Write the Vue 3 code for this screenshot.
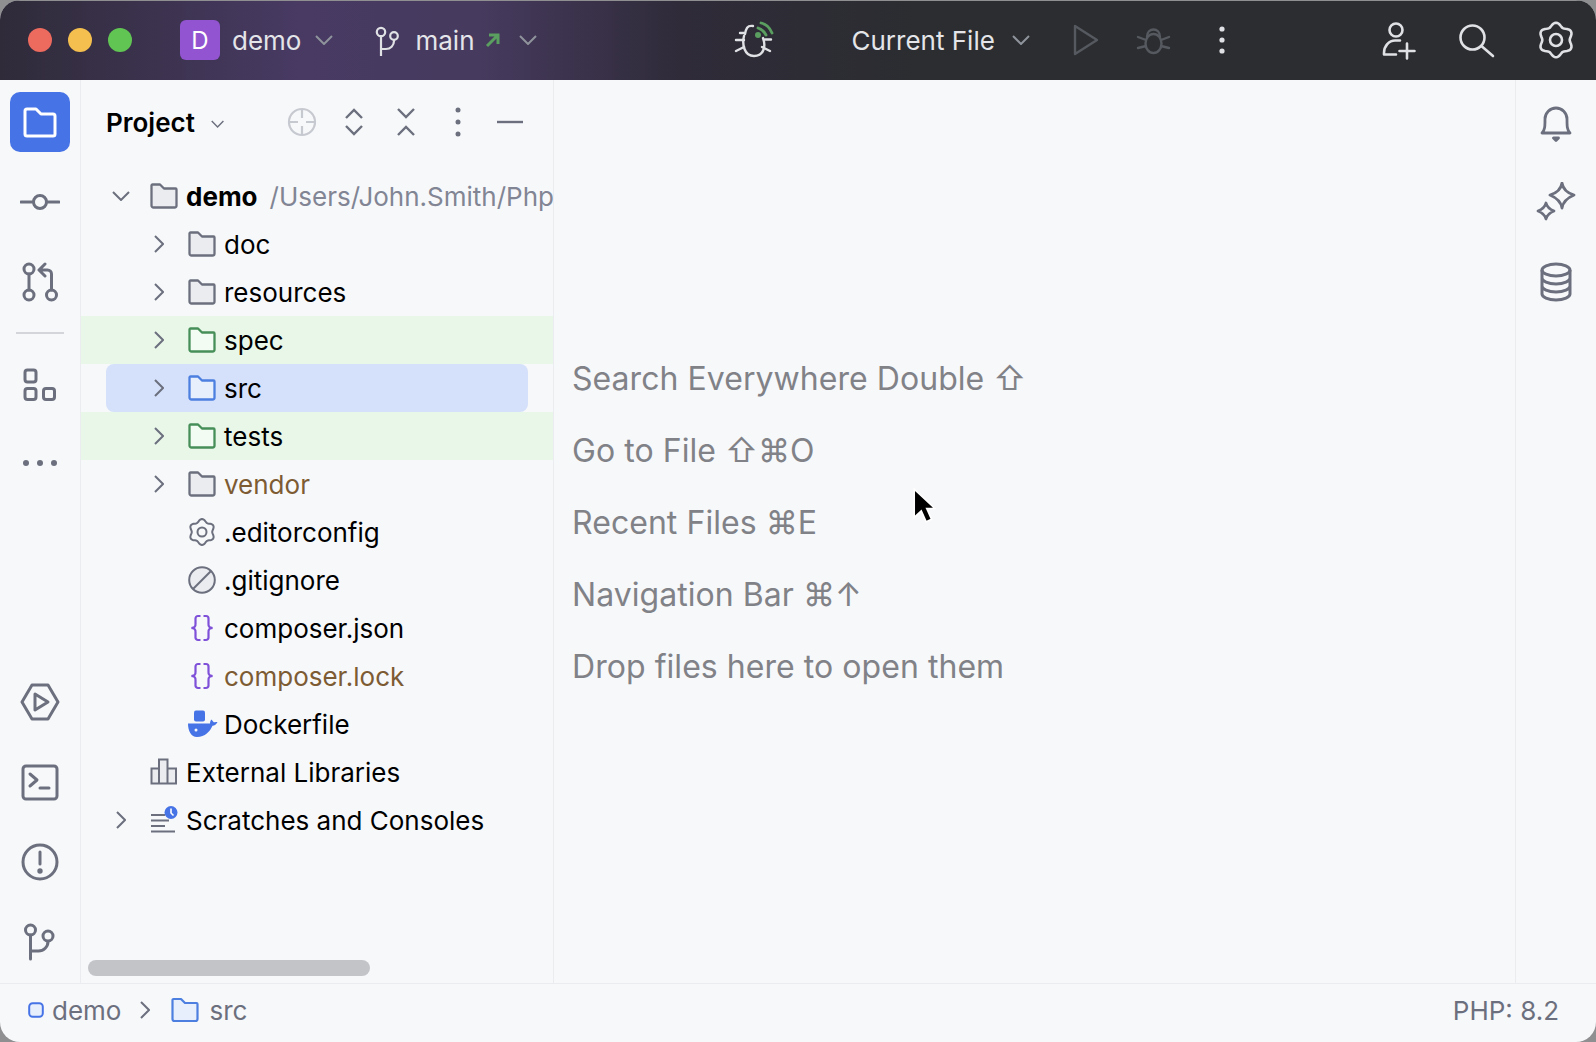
<script setup>
const rows = [
  { name: 'demo', depth: 0, chev: 'down', icon: 'folder', tone: 'gray', bold: true, path: '/Users/John.Smith/Php' },
  { name: 'doc', depth: 1, chev: 'right', icon: 'folder', tone: 'gray' },
  { name: 'resources', depth: 1, chev: 'right', icon: 'folder', tone: 'gray' },
  { name: 'spec', depth: 1, chev: 'right', icon: 'folder', tone: 'green', bg: 'test' },
  { name: 'src', depth: 1, chev: 'right', icon: 'folder', tone: 'blue', bg: 'sel' },
  { name: 'tests', depth: 1, chev: 'right', icon: 'folder', tone: 'green', bg: 'test' },
  { name: 'vendor', depth: 1, chev: 'right', icon: 'folder', tone: 'gray', ignored: true },
  { name: '.editorconfig', depth: 1, icon: 'gear' },
  { name: '.gitignore', depth: 1, icon: 'ban' },
  { name: 'composer.json', depth: 1, icon: 'json' },
  { name: 'composer.lock', depth: 1, icon: 'json', ignored: true },
  { name: 'Dockerfile', depth: 1, icon: 'docker' },
  { name: 'External Libraries', depth: 0, icon: 'libs' },
  { name: 'Scratches and Consoles', depth: 0, chev: 'right', icon: 'scratch' },
]
const hints = [
  'Search Everywhere Double ⇧',
  'Go to File ⇧⌘O',
  'Recent Files ⌘E',
  'Navigation Bar ⌘↑',
  'Drop files here to open them',
]
// Smooth six-lobed gear outline, tips at top and bottom.
function gearPath(cx, cy, mean, amp) {
  const pts = []
  for (let i = 0; i < 72; i++) {
    const a = (i / 72) * Math.PI * 2
    const r = mean + amp * Math.cos(6 * a)
    pts.push((cx + r * Math.sin(a)).toFixed(2) + ' ' + (cy - r * Math.cos(a)).toFixed(2))
  }
  return 'M' + pts.join('L') + 'Z'
}
const bigGear = gearPath(18, 19, 15.5, 1.8)
const smallGear = gearPath(14, 14, 11.6, 1.4)
</script>

<template>
  <div class="window">
    <header class="titlebar">
      <div class="lights">
        <span class="light red"></span>
        <span class="light yellow"></span>
        <span class="light green"></span>
      </div>
      <span class="badge">D</span>
      <span class="tb-text project">demo</span>
      <svg class="tb-chev" viewBox="0 0 18 10"><path d="M1 1l8 8 8-8" /></svg>
      <svg class="branch" viewBox="0 0 24 32" fill="none" stroke="#dfe1e5" stroke-width="2.2">
        <circle cx="6" cy="8" r="4.200" /><circle cx="19" cy="12" r="3.800" />
        <path d="M6 12.500V32M6 25h5a8 8 0 0 0 8-8v-1" />
      </svg>
      <span class="tb-text branch-name">main</span>
      <svg class="arrow" viewBox="0 0 16 16" fill="none" stroke="#5a9e60" stroke-width="3"><path d="M2 14L13 3M4 3h9v9" /></svg>
      <svg class="tb-chev after-arrow" viewBox="0 0 18 10"><path d="M1 1l8 8 8-8" /></svg>

      <svg class="dbg" viewBox="0 0 40 40" fill="none" stroke="#dfe1e5" stroke-width="2.4" stroke-linecap="round">
        <path d="M19 6C13 5 12 9 11 14" />
        <path d="M10 16C8 24 10 36 20 36C30 36 32 26 29 18" />
        <path d="M2 20H10M2 31l8-4M31 19.500H37M28 27l8 4M6 13h4" />
        <path d="M27 3C32 4 36 8 38 13" stroke="#5a9e60" stroke-width="2.800" />
        <path d="M24 8C27 9 30 11 32 15" stroke="#5a9e60" stroke-width="2.800" />
        <circle cx="24" cy="15" r="3" fill="#5a9e60" stroke="none" />
      </svg>
      <span class="tb-text config">Current File</span>
      <svg class="tb-chev config-chev" viewBox="0 0 18 10"><path d="M1 1l8 8 8-8" /></svg>
      <svg class="run" viewBox="0 0 26 32" fill="none" stroke="#565a60" stroke-width="2.4" stroke-linejoin="round"><path d="M2 2l22 14L2 30z" /></svg>
      <svg class="dbg-off" viewBox="0 0 30 32" fill="none" stroke="#565a60" stroke-width="2.4" stroke-linecap="round">
        <ellipse cx="14.500" cy="19.500" rx="8" ry="9.500" />
        <path d="M8 13C8 3 21 3 21 13M-1 13l8 3M-1 24l8-2M30 13l-8 3M30 24l-8-2" />
      </svg>
      <svg class="kebab" viewBox="0 0 6 28" fill="#dfe1e5"><circle cx="3" cy="3" r="2.6" /><circle cx="3" cy="14" r="2.6" /><circle cx="3" cy="25" r="2.6" /></svg>
      <svg class="add-user" viewBox="0 0 38 40" fill="none" stroke="#dfe1e5" stroke-width="2.6" stroke-linecap="round">
        <circle cx="16" cy="10" r="6.500" /><path d="M4 34.500V33C4 26 9 20.500 15 20.500H20M4 34.500H16M27 23.500v15M19.500 31h15" />
      </svg>
      <svg class="search" viewBox="0 0 36 36" fill="none" stroke="#dfe1e5" stroke-width="2.6" stroke-linecap="round">
        <circle cx="13.500" cy="15.500" r="12" /><path d="M23 24.500L34 34" />
      </svg>
      <svg class="settings" viewBox="0 0 36 38" fill="none" stroke="#dfe1e5" stroke-width="2.6" stroke-linejoin="round">
        <path :d="bigGear" /><circle cx="18" cy="19" r="6" />
      </svg>
    </header>

    <div class="body">
      <nav class="rail">
        <div class="rail-group">
          <button class="rail-btn active">
            <svg viewBox="0 0 40 40" fill="#4673e6" stroke="#fff" stroke-width="3" stroke-linejoin="round"><path d="M5 9a2 2 0 0 1 2-2h9l5 5h12a2 2 0 0 1 2 2v18a2 2 0 0 1-2 2H7a2 2 0 0 1-2-2z" /></svg>
          </button>
          <button class="rail-btn">
            <svg viewBox="0 0 40 40" fill="none" stroke="#6c707e" stroke-width="3" stroke-linecap="round"><circle cx="20" cy="20" r="6.500" /><path d="M1 20h12M27 20h12" /></svg>
          </button>
          <button class="rail-btn">
            <svg viewBox="0 0 40 40" fill="none" stroke="#6c707e" stroke-width="3" stroke-linecap="round" stroke-linejoin="round"><circle cx="9" cy="7" r="5" /><circle cx="9" cy="33" r="5" /><circle cx="31.500" cy="33" r="5" /><path d="M9 12v16M31.500 28V12a4 4 0 0 0-4-4h-8M25 2l-6 6 6 6" /></svg>
          </button>
          <span class="rail-sep"></span>
          <button class="rail-btn">
            <svg viewBox="0 0 40 40" fill="none" stroke="#6c707e" stroke-width="3" stroke-linejoin="round"><rect x="5" y="5" width="11" height="12" rx="2.500" /><rect x="5" y="23.500" width="11" height="11" rx="2.500" /><rect x="23.500" y="23.500" width="11" height="11" rx="2.500" /></svg>
          </button>
          <button class="rail-btn more">
            <svg viewBox="0 0 40 40" fill="#6c707e"><circle cx="6" cy="20" r="3" /><circle cx="20" cy="20" r="3" /><circle cx="34" cy="20" r="3" /></svg>
          </button>
        </div>
        <div class="rail-group">
          <button class="rail-btn">
            <svg viewBox="0 0 40 40" fill="none" stroke="#6c707e" stroke-width="3" stroke-linejoin="round"><path d="M12 3h16l10 17-10 17H12L2 20z" /><path d="M15 12l13 8-13 8z" /></svg>
          </button>
          <button class="rail-btn">
            <svg viewBox="0 0 40 40" fill="none" stroke="#6c707e" stroke-width="3" stroke-linecap="round" stroke-linejoin="round"><rect x="3" y="4" width="34" height="33" rx="3" /><path d="M10 12l7 6-7 6M20 26h9" /></svg>
          </button>
          <button class="rail-btn">
            <svg viewBox="0 0 40 40" fill="none" stroke="#6c707e" stroke-width="3" stroke-linecap="round"><circle cx="20" cy="20" r="17" /><path d="M20 10v12" /><circle cx="20" cy="29" r="1.200" fill="#6c707e" /></svg>
          </button>
          <button class="rail-btn">
            <svg viewBox="0 0 40 40" fill="none" stroke="#6c707e" stroke-width="3" stroke-linecap="round"><circle cx="10.500" cy="8" r="5" /><circle cx="28" cy="14" r="5" /><path d="M10.500 13v24M10.500 29h8a9.500 9.500 0 0 0 9.500-9.500" /></svg>
          </button>
        </div>
      </nav>

      <aside class="panel">
        <div class="panel-head">
          <span class="panel-title">Project</span>
          <svg class="gray-chev head-chev" viewBox="0 0 18 10"><path d="M1 1l8 8 8-8" /></svg>
          <svg class="ph-icon locate" viewBox="0 0 30 30" fill="none" stroke="#c7c9d0" stroke-width="2.200"><circle cx="15" cy="15" r="13" /><path d="M15 2v9M15 19v9M2 15h9M19 15h9" /></svg>
          <svg class="ph-icon expand" viewBox="0 0 20 30" fill="none" stroke="#6c707e" stroke-width="2.400"><path d="M2 11l8-8 8 8M2 19l8 8 8-8" /></svg>
          <svg class="ph-icon" viewBox="0 0 20 30" fill="none" stroke="#6c707e" stroke-width="2.400"><path d="M2 2l8 8 8-8M2 28l8-8 8 8" /></svg>
          <svg class="ph-icon small" viewBox="0 0 6 30" fill="#6c707e"><circle cx="3" cy="3" r="2.500" /><circle cx="3" cy="15" r="2.500" /><circle cx="3" cy="27" r="2.500" /></svg>
          <svg class="ph-icon minimize" viewBox="0 0 26 4" stroke="#6c707e" stroke-width="2.400"><path d="M0 2h26" /></svg>
        </div>

        <div class="tree">
          <div v-for="r in rows" :key="r.name" class="row" :class="['d' + r.depth, r.bg]">
            <span class="chev-box">
              <svg v-if="r.chev === 'down'" class="tree-chev down" viewBox="0 0 18 10"><path d="M1 1l8 8 8-8" /></svg>
              <svg v-else-if="r.chev" class="tree-chev right" viewBox="0 0 10 18"><path d="M1 1l8 8-8 8" /></svg>
            </span>
            <svg class="file-icon" :class="r.tone" viewBox="0 0 28 28">
              <path v-if="r.icon === 'folder'" class="folder" d="M1.500 3.500a1 1 0 0 1 1-1h7.500l4 4h11.500a1 1 0 0 1 1 1v16a2 2 0 0 1-2 2h-21a2 2 0 0 1-2-2z" />
              <template v-else-if="r.icon === 'gear'">
                <path class="outline" :d="smallGear" />
                <circle class="outline" cx="14" cy="14" r="4.500" />
              </template>
              <template v-else-if="r.icon === 'ban'">
                <circle class="ban-c" cx="14" cy="14" r="12.800" />
                <path class="outline" d="M5 23L23 5" />
              </template>
              <path v-else-if="r.icon === 'json'" class="json" d="M12.500 2H10a2.500 2.500 0 0 0-2.500 2.500V10a3.500 3.500 0 0 1-4 4 3.500 3.500 0 0 1 4 4v5.500A2.500 2.500 0 0 0 10 26h2.500M15.500 2H18a2.500 2.500 0 0 1 2.500 2.500V10a3.500 3.500 0 0 0 4 4 3.500 3.500 0 0 0-4 4v5.500A2.500 2.500 0 0 1 18 26h-2.500" />
              <template v-else-if="r.icon === 'docker'">
                <rect class="dock" x="6" y="0.500" width="11" height="11" rx="2" />
                <path class="dock" d="M0 13.500H22c0-1.500.5-3 1.500-4l2 2.500c1 .5 2.500 0 4 0-1 2.500-3 3.500-5 3.800C22 21.500 17 27 9 27 3 27 0 21 0 13.500z" />
                <circle cx="8" cy="20" r="1.500" fill="#f7f8fa" />
              </template>
              <template v-else-if="r.icon === 'libs'">
                <path class="lib" d="M1.500 10.500H9v15H1.500zM9 1.500h8.500v24H9zM17.500 10.500H26v15h-8.500z" />
              </template>
              <template v-else-if="r.icon === 'scratch'">
                <path class="lines" d="M1 9h14M1 14.500h18M1 20h14M1 25.500h24" />
                <circle cx="21" cy="6.500" r="6.500" fill="#4673e6" />
                <path d="M21 2.500V7l2.500 2.500" fill="none" stroke="#fff" stroke-width="1.600" />
              </template>
            </svg>
            <span class="row-name" :class="{ bold: r.bold, ignored: r.ignored }">{{ r.name }}</span>
            <span v-if="r.path" class="row-path">{{ r.path }}</span>
          </div>
        </div>
        <div class="hscroll"></div>
      </aside>

      <main class="editor">
        <p v-for="h in hints" :key="h" class="hint">{{ h }}</p>
        <svg class="cursor" viewBox="0 0 22 34">
          <path d="M2 1v26l6.500-6 4.500 10 5-2.200-4.500-10H21z" fill="#000" stroke="#fff" stroke-width="1.500" />
        </svg>
      </main>

      <nav class="rail right-rail">
        <button class="rail-btn">
          <svg viewBox="0 0 40 40" fill="none" stroke="#6c707e" stroke-width="2.800" stroke-linejoin="round"><path d="M6 31c3-3 3-7 3-14a11 11 0 0 1 22 0c0 7 0 11 3 14z" /><path d="M17.500 36h5l-2.500 2.500z" fill="#6c707e" /></svg>
        </button>
        <button class="rail-btn">
          <svg viewBox="0 0 40 40" fill="none" stroke="#6c707e" stroke-width="2.800" stroke-linejoin="round"><path d="M26 1C27 7 31 11 38 13C31 16 27 20 26 26C25 20 21 16 14 13C21 11 25 7 26 1Z" /><path d="M10 21C11 25 13 27 18 29C13 31 11 33 10 37C9 33 7 31 2 29C7 27 9 25 10 21Z" /></svg>
        </button>
        <button class="rail-btn">
          <svg viewBox="0 0 40 40" fill="none" stroke="#6c707e" stroke-width="3"><ellipse cx="20" cy="8" rx="14" ry="6" /><path d="M6 8v24c0 3 6 6 14 6s14-3 14-6V8M6 16c0 3 6 6 14 6s14-3 14-6M6 24c0 3 6 6 14 6s14-3 14-6" /></svg>
        </button>
      </nav>
    </div>

    <footer class="status">
      <svg class="module" viewBox="0 0 16 16"><rect x="1.200" y="1.200" width="13.600" height="13.600" rx="3.500" fill="#e7effd" stroke="#4673e6" stroke-width="2" /></svg>
      <span class="crumb">demo</span>
      <svg class="crumb-chev" viewBox="0 0 10 18"><path d="M1 1l8 8-8 8" /></svg>
      <svg class="crumb-folder" viewBox="0 0 28 26"><path d="M1.500 3a1 1 0 0 1 1-1h7.500l4 4h11.500a1 1 0 0 1 1 1v15a2 2 0 0 1-2 2h-21a2 2 0 0 1-2-2z" /></svg>
      <span class="crumb">src</span>
      <span class="php">PHP: 8.2</span>
    </footer>
  </div>
</template>

<style>
html, body { margin: 0; background: #8f8f92; }
</style>

<style scoped>
.window {
  width: 1596px;
  height: 1042px;
  display: flex;
  flex-direction: column;
  background: #f7f8fa;
  border-radius: 20px;
  overflow: hidden;
  font-family: Inter, "DejaVu Sans", sans-serif;
  color: #000;
}

/* Title bar */
.titlebar {
  height: 80px;
  flex: none;
  display: flex;
  align-items: center;
  box-sizing: border-box;
  padding-left: 28px;
  background: linear-gradient(90deg, #2f2b39 0, #483a63 300px, #463a5e 480px, #2f2b39 680px, #2b2d30 930px);
  box-shadow: inset 0 1px 0 #8f8f92;
  color: #e4e5e9;
}
.lights { display: flex; gap: 16px; }
.light { width: 24px; height: 24px; border-radius: 50%; }
.light.red { background: #ec6a5e; }
.light.yellow { background: #f4bf4f; }
.light.green { background: #61c554; }
.badge {
  width: 40px;
  height: 40px;
  margin-left: 48px;
  border-radius: 6px;
  background: #9254d1;
  color: #fff;
  font-size: 24px;
  display: flex;
  align-items: center;
  justify-content: center;
}
.tb-text { font-size: 26px; line-height: 32px; padding-top: 2px; }
.project { margin-left: 12px; }
.tb-chev { width: 18px; height: 10px; margin-left: 14px; fill: none; stroke: #8f939b; stroke-width: 2; }
.branch { width: 24px; height: 32px; margin-left: 42px; }
.branch-name { margin-left: 16px; }
.arrow { width: 16px; height: 16px; margin-left: 10px; }
.tb-chev.after-arrow { margin-left: 18px; }
.dbg { width: 40px; height: 40px; margin-left: 197px; }
.config { margin-left: 78px; }
.tb-chev.config-chev { margin-left: 17px; }
.run { width: 26px; height: 32px; margin-left: 43px; }
.dbg-off { width: 30px; height: 32px; margin-left: 40px; overflow: visible; }
.kebab { width: 6px; height: 28px; margin-left: 50px; }
.add-user { width: 38px; height: 40px; margin-left: 155px; }
.search { width: 36px; height: 36px; margin-left: 41px; }
.settings { width: 36px; height: 38px; margin-left: 43px; }

/* Layout */
.body { flex: 1; display: flex; min-height: 0; }
.rail {
  width: 81px;
  flex: none;
  box-sizing: border-box;
  padding: 12px 0 11px;
  display: flex;
  flex-direction: column;
  justify-content: space-between;
  align-items: center;
  border-right: 1px solid #ebecf0;
}
.rail-group { display: flex; flex-direction: column; align-items: center; gap: 20px; }
.rail-btn {
  width: 60px;
  height: 60px;
  padding: 0;
  border: 0;
  background: none;
  border-radius: 10px;
  display: flex;
  align-items: center;
  justify-content: center;
}
.rail-btn svg { width: 40px; height: 40px; }
.rail-btn.active { background: #4673e6; }
.rail-btn.more { margin-top: -2px; }
.rail-sep { width: 48px; height: 2px; margin: 0 0 1px; background: #d3d5db; }
.right-rail {
  width: 81px;
  justify-content: flex-start;
  gap: 20px;
  border-right: 0;
  border-left: 1px solid #ebecf0;
}

/* Project panel */
.panel {
  width: 472px;
  flex: none;
  position: relative;
  overflow: hidden;
  border-right: 1px solid #ebecf0;
}
.panel-head {
  height: 84px;
  box-sizing: border-box;
  padding: 0 30px 0 25px;
  display: flex;
  align-items: center;
}
.panel-title { font-size: 26px; font-weight: 600; line-height: 32px; padding-top: 2px; }
.gray-chev { fill: none; stroke: #6c707e; stroke-width: 2; }
.head-chev { width: 18px; height: 10px; margin-left: 16px; margin-top: 4px; }
.ph-icon { width: 20px; height: 30px; margin-left: 32px; flex: none; }
.ph-icon.locate { width: 30px; margin-left: 63px; }
.ph-icon.expand { margin-left: 27px; }
.ph-icon.small { width: 6px; margin-left: 39px; }
.ph-icon.minimize { width: 26px; height: 4px; margin-left: 36px; }

.tree { padding-top: 8px; }
.row {
  height: 48px;
  display: flex;
  align-items: center;
  white-space: nowrap;
  font-size: 26px;
  box-sizing: border-box;
}
.row.d0 { padding-left: 27px; }
.row.d1 { padding-left: 65px; }
.row.test { background: #e9f7e9; }
.row.sel { background: #d5e1fa; border-radius: 8px; margin: 0 25px; padding-left: 40px; }
.chev-box { width: 26px; flex: none; display: flex; justify-content: center; align-items: center; margin-right: 16px; }
.tree-chev { fill: none; stroke: #6c707e; stroke-width: 2; }
.tree-chev.down { width: 18px; height: 10px; }
.tree-chev.right { width: 10px; height: 18px; }
.file-icon { width: 28px; height: 28px; flex: none; margin-right: 8px; overflow: visible; }
.folder { fill: #ebecf0; stroke: #6c707e; stroke-width: 2.300; stroke-linejoin: round; }
.green .folder { fill: #f2fcf3; stroke: #478f58; }
.blue .folder { fill: #e7effd; stroke: #4c7fe0; }
.outline { fill: none; stroke: #6c707e; stroke-width: 2; stroke-linejoin: round; }
.ban-c { fill: #ebecf0; stroke: #6c707e; stroke-width: 2; }
.json { fill: none; stroke: #7f51d9; stroke-width: 2.200; }
.dock { fill: #4673e6; }
.lib { fill: #ebecf0; stroke: #6c707e; stroke-width: 2; }
.lines { fill: none; stroke: #6c707e; stroke-width: 2; }
.row-name.bold { font-weight: 650; }
.row-name.ignored { color: #7d5b33; }
.row-path { color: #818594; margin-left: 12px; }
.hscroll {
  position: absolute;
  left: 7px;
  bottom: 7px;
  width: 282px;
  height: 16px;
  border-radius: 8px;
  background: #c3c4c8;
}

/* Editor */
.editor {
  flex: 1;
  position: relative;
  box-sizing: border-box;
  padding: 263px 0 0 18px;
  min-width: 0;
}
.hint {
  margin: 0;
  height: 72px;
  line-height: 72px;
  font-size: 32px;
  letter-spacing: 0.05px;
  color: #818287;
  white-space: nowrap;
}
.cursor { position: absolute; left: 358px; top: 408px; width: 24px; height: 37px; }

/* Status bar */
.status {
  height: 59px;
  flex: none;
  box-sizing: border-box;
  border-top: 1px solid #ebecf0;
  display: flex;
  align-items: center;
  padding: 0 37px 6px 28px;
  font-size: 26px;
  color: #6c707e;
}
.module { width: 16px; height: 16px; margin-right: 8px; }
.crumb-chev { width: 10px; height: 18px; margin: 0 21px 0 19px; fill: none; stroke: #6c707e; stroke-width: 2; }
.crumb-folder { width: 28px; height: 26px; margin-right: 10px; fill: #e7effd; stroke: #4c7fe0; stroke-width: 2.200; stroke-linejoin: round; }
.php { margin-left: auto; }
</style>
